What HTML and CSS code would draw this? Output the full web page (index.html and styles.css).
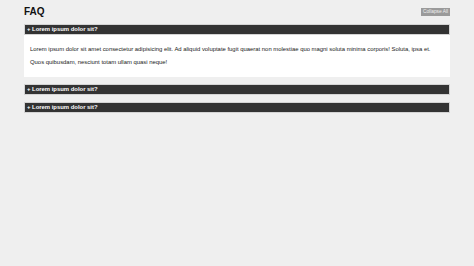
FILE: index.html
```html
<!DOCTYPE html>
<html>
<head>
<meta charset="utf-8">
<link rel="stylesheet" href="styles.css">
</head>
<body>
<div class="page">
  <div class="top">
    <h1 class="title">FAQ</h1>
    <button class="collapse">Collapse All</button>
  </div>
  <div class="item">
    <div class="head">+ Lorem ipsum dolor sit?</div>
    <div class="body">
      <p>Lorem ipsum dolor sit amet consectetur adipisicing elit. Ad aliquid voluptate fugit quaerat non molestiae quo magni soluta minima corporis! Soluta, ipsa et.</p>
      <p>Quos quibusdam, nesciunt totam ullam quasi neque!</p>
    </div>
  </div>
  <div class="item">
    <div class="head">+ Lorem ipsum dolor sit?</div>
  </div>
  <div class="item">
    <div class="head">+ Lorem ipsum dolor sit?</div>
  </div>
</div>
</body>
</html>
```
FILE: styles.css
```css
html, body {
  margin: 0;
  padding: 0;
  background: #efefef;
  font-family: "Liberation Sans", Arial, sans-serif;
}
.page {
  width: 426px;
  margin: 0 0 0 24px;
  padding-top: 5px;
}
.top {
  display: flex;
  justify-content: space-between;
  align-items: flex-start;
  height: 19px;
}
.title {
  margin: 1px 0 0 0;
  font-size: 10px;
  line-height: 12px;
  font-weight: bold;
  color: #111;
}
.collapse {
  margin: 3px 0 0 0;
  padding: 0;
  height: 8px;
  width: 29px;
  border: none;
  background: #9a9a9a;
  color: #eee;
  font-family: "Liberation Sans", Arial, sans-serif;
  font-size: 4.8px;
  line-height: 8px;
  white-space: nowrap;
}
.item {
  margin-bottom: 7px;
}
.head {
  background: #333;
  border: 1px solid #d4d4d4;
  box-sizing: border-box;
  height: 11px;
  color: #fff;
  font-weight: bold;
  font-size: 5.9px;
  line-height: 9px;
  padding-left: 2px;
}
.body {
  background: #fff;
  padding: 8px 6px 4px 6px;
  height: 30px;
}
.body p {
  margin: 0;
  font-size: 5.9px;
  line-height: 13px;
  color: #1a1a1a;
}
```
